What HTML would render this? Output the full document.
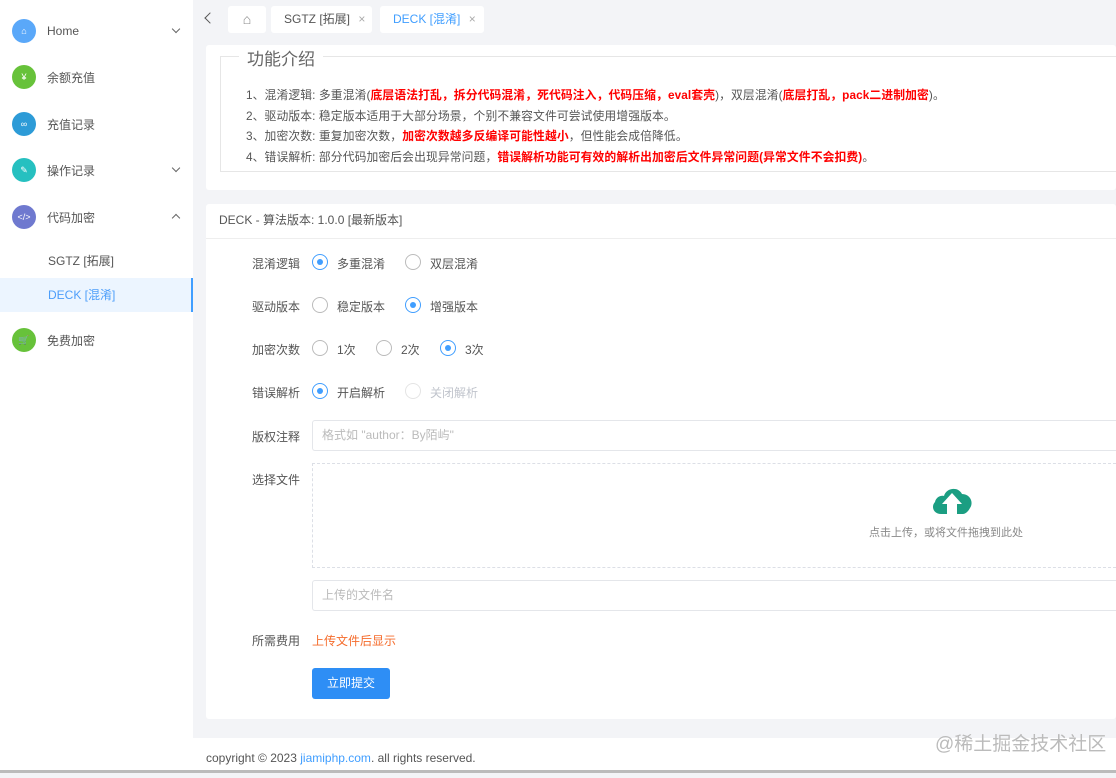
<!DOCTYPE html>
<html><head><meta charset="utf-8"><style>
*{box-sizing:border-box;margin:0;padding:0}
body{width:1116px;height:773px;overflow:hidden;background:#f3f4f7;font-family:"Liberation Sans","Noto Sans CJK SC",sans-serif;font-size:12px;color:#555;position:relative}
.side{position:absolute;left:0;top:0;width:193px;height:773px;background:#fff}
.mi{position:absolute;left:0;width:193px;height:40px;display:flex;align-items:center}
.ic{width:24px;height:24px;border-radius:50%;margin-left:12px;margin-right:11px;display:flex;align-items:center;justify-content:center;color:#fff;font-size:9px}
.mi span{font-size:12px;color:#555}
.arr{position:absolute;right:14px;top:15px;width:6px;height:6px;border-right:1.5px solid #666;border-bottom:1.5px solid #666;transform:rotate(45deg)}
.arr.up{transform:rotate(-135deg);top:18px}
.sub{position:absolute;left:0;width:193px;height:34px;line-height:34px;padding-left:48px;font-size:12px;color:#555}
.tabs{position:absolute;left:193px;top:0;right:0;height:40px}
.tab{position:absolute;top:6px;height:27px;background:#fff;border-radius:3px;font-size:12px;line-height:27px;padding-left:13px;color:#555}
.card{position:absolute;left:206px;right:0;background:#fff;border-radius:3px}
.fs{position:absolute;left:14px;top:11px;right:0;height:116px;border:1px solid #e6e6e6;border-right:none}
.fs h3{position:absolute;left:18px;background:#fff;padding:0 8px;font-weight:normal;font-size:17px;color:#666;top:-7px;line-height:20px}
.fs p{position:absolute;left:25px;font-size:11.8px;color:#555;white-space:nowrap;letter-spacing:0.1px}
.r{color:#f00;font-weight:bold}
.lab{position:absolute;left:46px;font-size:12px;color:#555}
.rad{position:absolute;width:16px;height:16px;border-radius:50%;border:1px solid #bbb;background:#fff}
.rad.on{border:1px solid #409eff}
.rad.on::after{content:"";position:absolute;left:4px;top:4px;width:6px;height:6px;border-radius:50%;background:#409eff}
.rt{position:absolute;font-size:12px;color:#555}
.inp{position:absolute;left:106px;right:0;border:1px solid #e4e6ea;border-right:none;border-radius:3px 0 0 3px;color:#bbb;padding-left:9px;font-size:12px}
</style></head><body>
<div class="side">
 <div class="mi" style="top:11px"><div class="ic" style="background:#5aa8f9">⌂</div><span>Home</span><div class="arr"></div></div>
 <div class="mi" style="top:57px"><div class="ic" style="background:#67c23a">¥</div><span>余额充值</span></div>
 <div class="mi" style="top:104px"><div class="ic" style="background:#2d9bd7">∞</div><span>充值记录</span></div>
 <div class="mi" style="top:150px"><div class="ic" style="background:#26c0c0">✎</div><span>操作记录</span><div class="arr"></div></div>
 <div class="mi" style="top:197px"><div class="ic" style="background:#6f79cf">&lt;/&gt;</div><span>代码加密</span><div class="arr up"></div></div>
 <div class="sub" style="top:244px">SGTZ [拓展]</div>
 <div class="sub" style="top:278px;background:#ecf5ff;color:#4d9efa;border-right:2px solid #409eff">DECK [混淆]</div>
 <div class="mi" style="top:320px"><div class="ic" style="background:#67c23a">🛒</div><span>免费加密</span></div>
</div>
<div class="tabs">
 <div style="position:absolute;left:13px;top:14px;width:8px;height:8px;border-left:1.5px solid #555;border-bottom:1.5px solid #555;transform:rotate(45deg)"></div>
 <div class="tab" style="left:35px;width:38px;padding:0;text-align:center;color:#888;font-size:14px">⌂</div>
 <div class="tab" style="left:78px;width:101px">SGTZ [拓展] <span style="color:#aaa;margin-left:5px">×</span></div>
 <div class="tab" style="left:187px;width:104px;color:#409eff">DECK [混淆] <span style="color:#aaa;margin-left:5px">×</span></div>
</div>
<div class="card" style="top:45px;height:145px">
 <div class="fs"><h3>功能介绍</h3>
 <p style="top:29px">1、混淆逻辑: 多重混淆(<span class="r">底层语法打乱，拆分代码混淆，死代码注入，代码压缩，eval套壳</span>)，双层混淆(<span class="r">底层打乱，pack二进制加密</span>)。</p>
 <p style="top:50px">2、驱动版本: 稳定版本适用于大部分场景，个别不兼容文件可尝试使用增强版本。</p>
 <p style="top:70px">3、加密次数: 重复加密次数，<span class="r">加密次数越多反编译可能性越小</span>，但性能会成倍降低。</p>
 <p style="top:91px">4、错误解析: 部分代码加密后会出现异常问题，<span class="r">错误解析功能可有效的解析出加密后文件异常问题(异常文件不会扣费)</span>。</p>
 </div>
</div>
<div class="card" style="top:204px;height:515px">
 <div style="height:35px;border-bottom:1px solid #eee;line-height:33px;padding-left:13px;font-size:12px;color:#555">DECK - 算法版本: 1.0.0 [最新版本]</div>
 <div class="lab" style="top:51px">混淆逻辑</div>
 <div class="rad on" style="left:106px;top:50px"></div><div class="rt" style="left:131px;top:51px">多重混淆</div>
 <div class="rad" style="left:199px;top:50px"></div><div class="rt" style="left:224px;top:51px">双层混淆</div>
 <div class="lab" style="top:94px">驱动版本</div>
 <div class="rad" style="left:106px;top:93px"></div><div class="rt" style="left:131px;top:94px">稳定版本</div>
 <div class="rad on" style="left:199px;top:93px"></div><div class="rt" style="left:224px;top:94px">增强版本</div>
 <div class="lab" style="top:137px">加密次数</div>
 <div class="rad" style="left:106px;top:136px"></div><div class="rt" style="left:131px;top:137px">1次</div>
 <div class="rad" style="left:170px;top:136px"></div><div class="rt" style="left:195px;top:137px">2次</div>
 <div class="rad on" style="left:234px;top:136px"></div><div class="rt" style="left:259px;top:137px">3次</div>
 <div class="lab" style="top:180px">错误解析</div>
 <div class="rad on" style="left:106px;top:179px"></div><div class="rt" style="left:131px;top:180px">开启解析</div>
 <div class="rad" style="left:199px;top:179px;border-color:#e4e4e4"></div><div class="rt" style="left:224px;top:180px;color:#c0c4cc">关闭解析</div>
 <div class="lab" style="top:224px">版权注释</div>
 <div class="inp" style="top:216px;height:31px;line-height:29px">格式如 "author：By陌屿"</div>
 <div class="lab" style="top:267px">选择文件</div>
 <div style="position:absolute;left:106px;right:0;top:259px;height:105px;border:1px dashed #dcdfe6;border-right:none"></div>
 <svg style="position:absolute;left:724px;top:280px" width="44" height="32" viewBox="0 0 44 32"><path d="M11 30 C3 30 1 22 5 18 C6 13 11 11 14 12 C16 4 28 2 32 10 C40 10 44 18 40 24 C38 28 35 30 33 30 L27 30 L27 20 L32 20 L22 9 L12 20 L17 20 L17 30 Z" fill="#1b9e82"/></svg>
 <div style="position:absolute;left:663px;top:320px;font-size:11px;color:#888">点击上传，或将文件拖拽到此处</div>
 <div class="inp" style="top:376px;height:31px;line-height:29px">上传的文件名</div>
 <div class="lab" style="top:428px">所需费用</div>
 <div class="rt" style="left:106px;top:428px;color:#f56c2c">上传文件后显示</div>
 <div style="position:absolute;left:106px;top:464px;width:78px;height:31px;background:#2e8ef5;border-radius:3px;color:#fff;text-align:center;line-height:31px;font-size:12px">立即提交</div>
</div>
<div style="position:absolute;left:193px;right:0;top:738px;height:32px;background:#fff;padding-left:13px;line-height:40px;font-size:12px;color:#555">copyright © 2023 <span style="color:#409eff">jiamiphp.com</span>. all rights reserved.</div>
<div style="position:absolute;left:935px;top:729px;font-size:19px;color:#bbb">@稀土掘金技术社区</div>
<div style="position:absolute;left:0;right:0;top:770px;height:3px;background:#bbb"></div>
</body></html>
